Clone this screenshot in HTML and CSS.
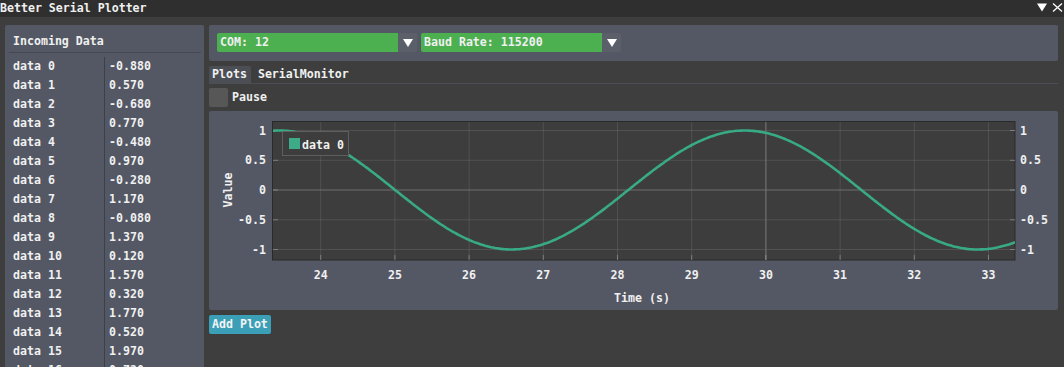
FILE: index.html
```html
<!DOCTYPE html>
<html lang="en">
<head>
    <meta charset="UTF-8">
    <meta name="viewport" content="width=device-width, initial-scale=1.0">
    <title>Better Serial Plotter</title>
    <link rel="stylesheet" href="styles.css">
</head>
<body>
    <div class="titlebar">
        <span class="title">Better Serial Plotter</span>
        <div class="title-icons">
            <svg width="10" height="9" viewBox="0 0 10 9"><path d="M0 0.5 L10 0.5 L5 8.5 Z" fill="#fff"/></svg>
            <svg width="11" height="9" viewBox="0 0 11 9"><path d="M1 0.5 L10 8.5 M10 0.5 L1 8.5" stroke="#fff" stroke-width="1.3" fill="none"/></svg>
        </div>
    </div>

    <div class="main">
        <div class="data-panel">
            <div class="data-head">Incoming Data</div>
            <div class="data-sep"></div>
            <div class="data-table">
                <div class="cell name">data 0</div><div class="cell value">-0.880</div>
                <div class="cell name">data 1</div><div class="cell value">0.570</div>
                <div class="cell name">data 2</div><div class="cell value">-0.680</div>
                <div class="cell name">data 3</div><div class="cell value">0.770</div>
                <div class="cell name">data 4</div><div class="cell value">-0.480</div>
                <div class="cell name">data 5</div><div class="cell value">0.970</div>
                <div class="cell name">data 6</div><div class="cell value">-0.280</div>
                <div class="cell name">data 7</div><div class="cell value">1.170</div>
                <div class="cell name">data 8</div><div class="cell value">-0.080</div>
                <div class="cell name">data 9</div><div class="cell value">1.370</div>
                <div class="cell name">data 10</div><div class="cell value">0.120</div>
                <div class="cell name">data 11</div><div class="cell value">1.570</div>
                <div class="cell name">data 12</div><div class="cell value">0.320</div>
                <div class="cell name">data 13</div><div class="cell value">1.770</div>
                <div class="cell name">data 14</div><div class="cell value">0.520</div>
                <div class="cell name">data 15</div><div class="cell value">1.970</div>
                <div class="cell name">data 16</div><div class="cell value">0.720</div>
                <div class="cell name">data 17</div><div class="cell value">2.170</div>
            </div>
        </div>

        <div class="workspace">
            <div class="toolbar">
                <div class="combo">
                    <span class="combo-label">COM: 12</span>
                    <span class="combo-arrow"><svg width="10" height="8" viewBox="0 0 10 8"><path d="M0 0 L10 0 L5 8 Z" fill="#fff"/></svg></span>
                </div>
                <div class="combo">
                    <span class="combo-label">Baud Rate: 115200</span>
                    <span class="combo-arrow"><svg width="10" height="8" viewBox="0 0 10 8"><path d="M0 0 L10 0 L5 8 Z" fill="#fff"/></svg></span>
                </div>
            </div>

            <div class="tabs">
                <span class="tab active">Plots</span>
                <span class="tab">SerialMonitor</span>
            </div>

            <label class="check-row"><span class="checkbox"></span>Pause</label>

            <div class="plot-panel">
                <svg class="plot" width="849" height="199" viewBox="0 0 849 199">
                    <defs>
                        <clipPath id="plot-clip"><rect x="64" y="11" width="742" height="138"/></clipPath>
                    </defs>
                    <rect x="63.5" y="10.5" width="742.5" height="138.5" fill="#3d3d3d" stroke="#2a2a2a"/>

                    <g class="grid">
                        <path d="M111.7 11V149 M185.9 11V149 M260.1 11V149 M334.3 11V149 M408.5 11V149 M482.7 11V149 M631.1 11V149 M705.3 11V149 M779.5 11V149"/>
                        <path d="M64 19.5H806 M64 49.3H806 M64 108.8H806 M64 138.5H806"/>
                    </g>
                    <path d="M64 79H806" stroke="#6e6e6e"/>
                    <path d="M556.9 11V149" stroke="#7a7a7a"/>

                    <g class="ticks">
                        <path d="M111.7 149v-5 M185.9 149v-5 M260.1 149v-5 M334.3 149v-5 M408.5 149v-5 M482.7 149v-5 M556.9 149v-5 M631.1 149v-5 M705.3 149v-5 M779.5 149v-5"/>
                        <path d="M64 19.5h5 M64 49.3h5 M64 79h5 M64 108.8h5 M64 138.5h5"/>
                        <path d="M806 19.5h-5 M806 49.3h-5 M806 79h-5 M806 108.8h-5 M806 138.5h-5"/>
                    </g>

                    <path id="curve" clip-path="url(#plot-clip)" fill="none" stroke="#38aa85" stroke-width="2.6" stroke-linejoin="round"/>

                    <rect x="73.5" y="20.5" width="66" height="24" fill="#3d3d3d" stroke="#5f5f5f"/>
                    <rect x="80" y="27" width="11" height="11" fill="#3dab87"/>
                    <text x="93" y="37.5">data 0</text>

                    <g class="y-left">
                        <text x="57" y="23.5">1</text>
                        <text x="57" y="53.3">0.5</text>
                        <text x="57" y="83">0</text>
                        <text x="57" y="112.8">-0.5</text>
                        <text x="57" y="142.5">-1</text>
                    </g>
                    <g class="y-right">
                        <text x="811" y="23.5">1</text>
                        <text x="811" y="53.3">0.5</text>
                        <text x="811" y="83">0</text>
                        <text x="811" y="112.8">-0.5</text>
                        <text x="811" y="142.5">-1</text>
                    </g>
                    <g class="x-labels">
                        <text x="111.7" y="167.5">24</text>
                        <text x="185.9" y="167.5">25</text>
                        <text x="260.1" y="167.5">26</text>
                        <text x="334.3" y="167.5">27</text>
                        <text x="408.5" y="167.5">28</text>
                        <text x="482.7" y="167.5">29</text>
                        <text x="556.9" y="167.5">30</text>
                        <text x="631.1" y="167.5">31</text>
                        <text x="705.3" y="167.5">32</text>
                        <text x="779.5" y="167.5">33</text>
                        <text x="433" y="191">Time (s)</text>
                    </g>
                    <text class="y-title" transform="translate(23 79) rotate(-90)">Value</text>
                </svg>
            </div>

            <button class="add-plot">Add Plot</button>
        </div>
    </div>

    <script>
        // data 0 over the visible time window (23.36 s .. 33.35 s)
        const pts = [];
        for (let x = 64; x <= 806; x += 2) {
            const t = 23.357 + (x - 63.7) / 74.2;
            const v = Math.cos(t - 29.72);
            pts.push(x + ' ' + (79 - v * 59.5).toFixed(1));
        }
        document.getElementById('curve').setAttribute('d', 'M' + pts.join(' L'));
    </script>
</body>
</html>
```

FILE: styles.css
```css
body { margin: 0; height: 100vh; overflow: hidden; background: #3e3e3e; color: #f0f0f0; font-family: "DejaVu Sans Mono", monospace; font-size: 11.6px; font-weight: bold; }

.titlebar { height: 17px; line-height: 17px; background: #2f2f2f; display: flex; justify-content: space-between; }
.title { white-space: pre; }
.title-icons { display: flex; align-items: flex-start; gap: 5px; padding: 3px 1px 0 0; }
.title-icons svg { display: block; }

.main { display: flex; gap: 5px; padding: 8px 0 0 5px; }

.data-panel { width: 199px; height: 360px; background: #545864; border-radius: 2px; overflow: hidden; }
.data-head { padding: 7px 8px 1px; line-height: 19px; }
.data-sep { height: 1px; background: #454852; margin: 0 3px 0 4px; }
.data-table { display: grid; grid-template-columns: 99px 1fr; margin-top: 4px; }
.cell { line-height: 19px; white-space: pre; }
.cell.name { padding-left: 8px; }
.cell.value { padding-left: 4px; border-left: 1px solid #3d4048; }

.workspace { width: 849px; display: flex; flex-direction: column; align-items: flex-start; }

.toolbar { align-self: stretch; display: flex; gap: 4px; padding: 8px 8px 9px; background: #545864; border-radius: 2px; }
.combo { display: flex; width: 200px; height: 19px; }
.combo-label { flex: 1; background: #4caf50; padding-left: 3px; line-height: 19px; white-space: pre; border-radius: 2px 0 0 2px; }
.combo-arrow { width: 19px; background: #5b5f6a; display: flex; align-items: center; justify-content: center; border-radius: 0 2px 2px 0; }
.combo-arrow svg { display: block; }

.tabs { align-self: stretch; display: flex; gap: 4px; margin-top: 5px; border-bottom: 1px solid #4b4e55; }
.tab { height: 17px; line-height: 17px; padding: 0 4px 0 3px; border-radius: 2px 2px 0 0; }
.tab.active { background: #4b4e55; }

.check-row { display: flex; align-items: center; gap: 4px; height: 19px; margin-top: 4px; line-height: 19px; }
.checkbox { width: 19px; height: 19px; background: #575757; border-radius: 2px; }

.plot-panel { align-self: stretch; height: 199px; margin-top: 4px; background: #545864; border-radius: 2px; }
.plot { display: block; font-family: "DejaVu Sans Mono", monospace; font-size: 11.6px; font-weight: bold; }
.plot text { fill: #f0f0f0; }
.grid path { stroke: rgba(255, 255, 255, 0.1); fill: none; }
.ticks path { stroke: rgba(255, 255, 255, 0.28); fill: none; }
.y-left text { text-anchor: end; }
.x-labels text { text-anchor: middle; }
.y-title { text-anchor: middle; }

.add-plot { margin-top: 5px; height: 19px; padding: 0 3px; border: none; border-radius: 2px; background: #3a9fb7; color: #f4f4f4; font: inherit; line-height: 19px; cursor: pointer; }
```
